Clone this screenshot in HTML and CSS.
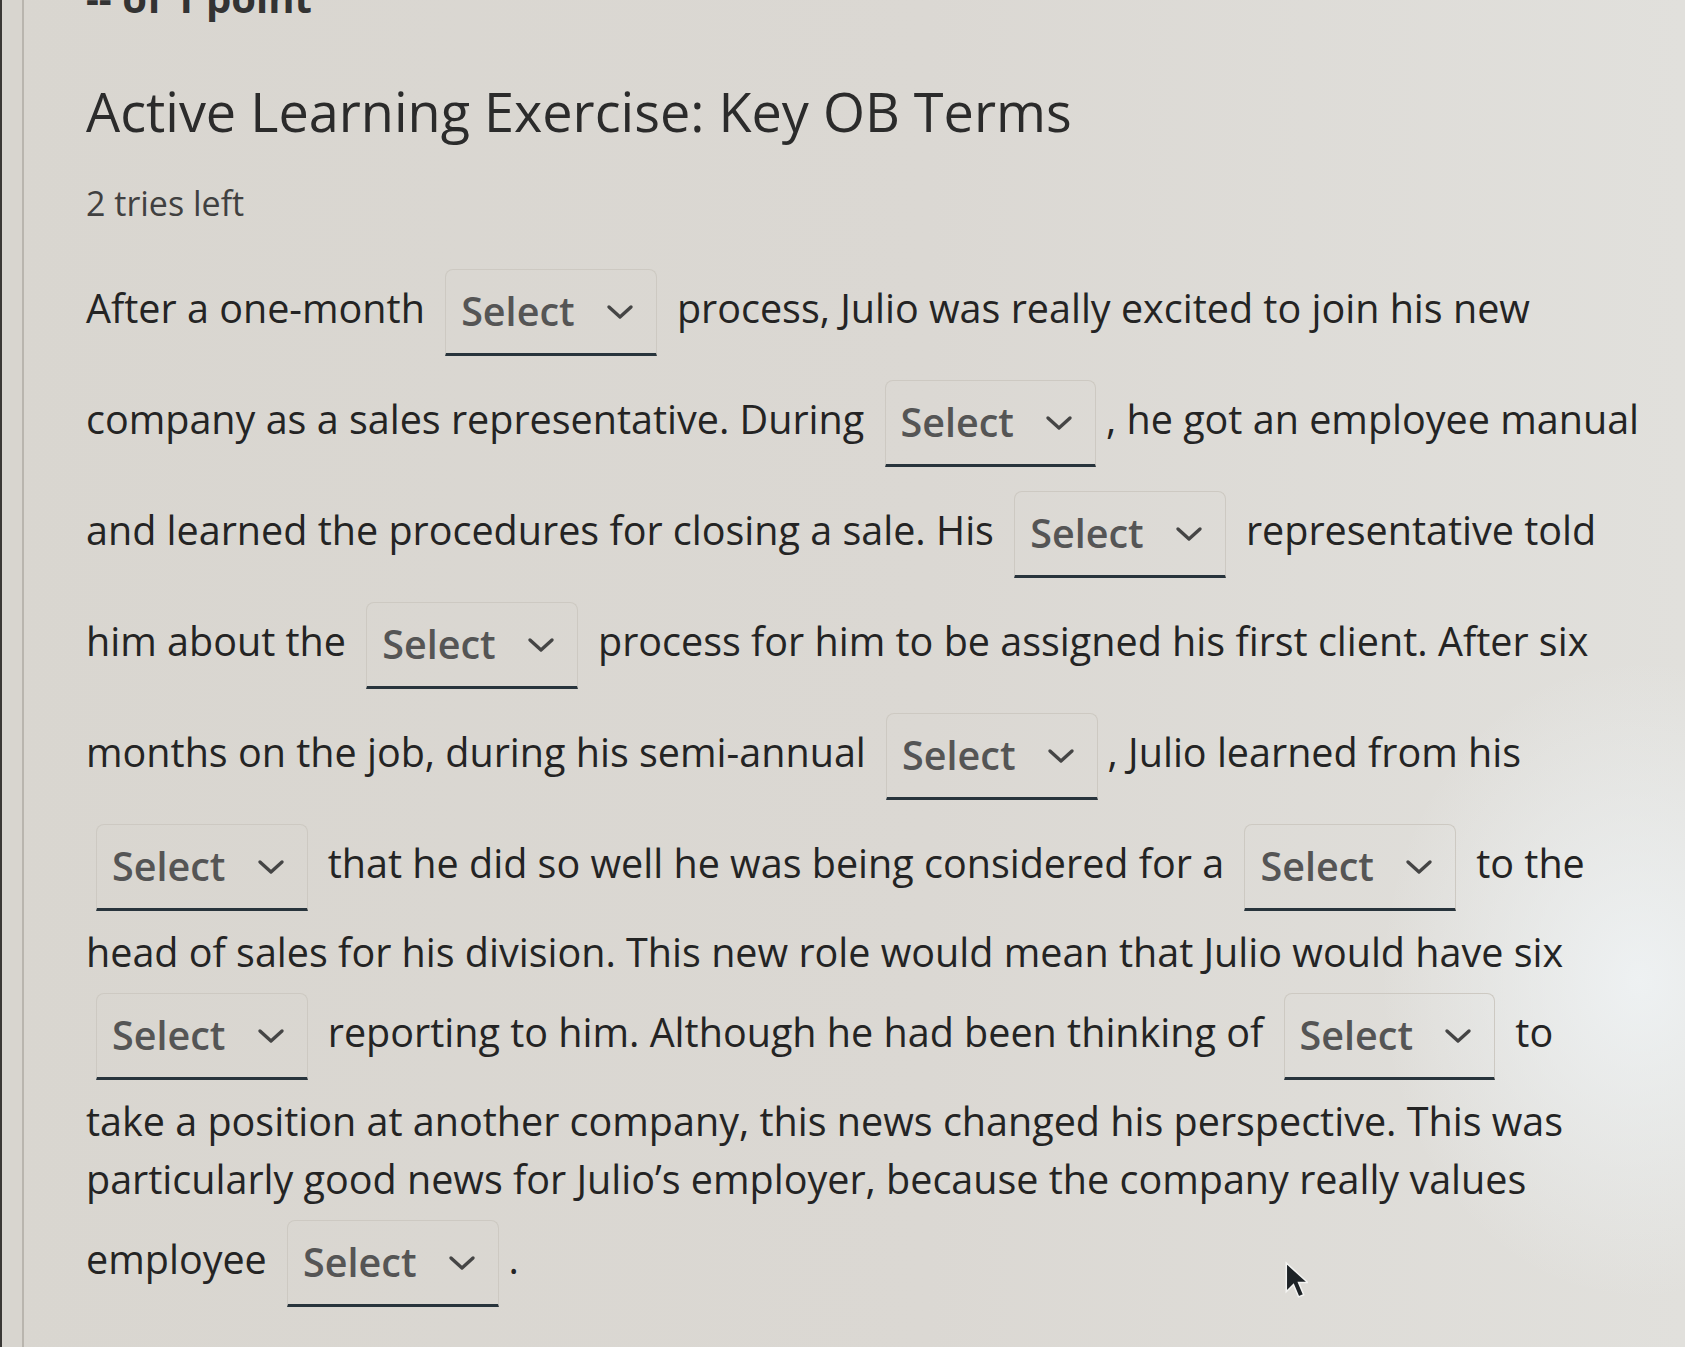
FILE: index.html
```html
<!DOCTYPE html>
<html lang="en">
<head>
<meta charset="utf-8">
<title>Active Learning Exercise: Key OB Terms</title>
<link rel="stylesheet" href="styles.css">
</head>
<body>
<div class="screen">
  <main class="question">
    <div class="points">-- of 1 point</div>
    <h1 class="title">Active Learning Exercise: Key OB Terms</h1>
    <p class="tries">2 tries left</p>
    <p class="passage">After a one-month <span class="dropdown"><span class="dropdown-label">Select</span><svg class="chevron" viewBox="0 0 28 16" aria-hidden="true"><polyline points="3,3 14,13 25,3"/></svg></span> process, Julio was really excited to join his new company as a sales representative. During <span class="dropdown"><span class="dropdown-label">Select</span><svg class="chevron" viewBox="0 0 28 16" aria-hidden="true"><polyline points="3,3 14,13 25,3"/></svg></span>, he got an employee manual and learned the procedures for closing a sale. His <span class="dropdown"><span class="dropdown-label">Select</span><svg class="chevron" viewBox="0 0 28 16" aria-hidden="true"><polyline points="3,3 14,13 25,3"/></svg></span> representative told him about the <span class="dropdown"><span class="dropdown-label">Select</span><svg class="chevron" viewBox="0 0 28 16" aria-hidden="true"><polyline points="3,3 14,13 25,3"/></svg></span> process for him to be assigned his first client. After six months on the job, during his semi-annual <span class="dropdown"><span class="dropdown-label">Select</span><svg class="chevron" viewBox="0 0 28 16" aria-hidden="true"><polyline points="3,3 14,13 25,3"/></svg></span>, Julio learned from his <span class="dropdown"><span class="dropdown-label">Select</span><svg class="chevron" viewBox="0 0 28 16" aria-hidden="true"><polyline points="3,3 14,13 25,3"/></svg></span> that he did so well he was being considered for a <span class="dropdown"><span class="dropdown-label">Select</span><svg class="chevron" viewBox="0 0 28 16" aria-hidden="true"><polyline points="3,3 14,13 25,3"/></svg></span> to the head of sales for his division. This new role would mean that Julio would have six <span class="dropdown"><span class="dropdown-label">Select</span><svg class="chevron" viewBox="0 0 28 16" aria-hidden="true"><polyline points="3,3 14,13 25,3"/></svg></span> reporting to him. Although he had been thinking of <span class="dropdown"><span class="dropdown-label">Select</span><svg class="chevron" viewBox="0 0 28 16" aria-hidden="true"><polyline points="3,3 14,13 25,3"/></svg></span> to take a position at another company, this news changed his perspective. This was particularly good news for Julio’s employer, because the company really values employee <span class="dropdown"><span class="dropdown-label">Select</span><svg class="chevron" viewBox="0 0 28 16" aria-hidden="true"><polyline points="3,3 14,13 25,3"/></svg></span>.</p>
  </main>
  <svg class="pointer" viewBox="0 0 24 40" aria-hidden="true"><path d="M3 2 L3 30 L10 23 L15 35 L20 33 L15 21 L24 21 Z"/></svg>
</div>
</body>
</html>
```
FILE: styles.css
```css
html, body {
  margin: 0;
  padding: 0;
}

body {
  width: 1685px;
  height: 1347px;
  overflow: hidden;
  background: linear-gradient(90deg, #3a3835 0, #3a3835 2px, #d8d5cf 2px, #d8d5cf 22px, #b9b5ae 22px, #b9b5ae 24px, transparent 24px),
              radial-gradient(ellipse 260px 320px at 1640px 980px, rgba(240, 244, 246, 0.85), rgba(240, 244, 246, 0) 100%),
              linear-gradient(90deg, #d9d6d0 0%, #dbd8d3 55%, #e1e0dc 100%);
  font-family: "Open Sans", "Noto Sans", sans-serif;
  color: #292929;
}

/* flow-root keeps the heading's negative margin inside the screen */
.screen {
  position: relative;
  display: flow-root;
  height: 100%;
}

.question {
  padding-left: 86px;
  width: 1556px;
}

.points {
  margin-top: -22px;
  font-size: 40px;
  line-height: 40px;
  font-weight: 700;
  color: #333;
}

.title {
  margin: 61px 0 0;
  font-size: 54px;
  line-height: 65px;
  font-weight: 400;
  color: #2b2b2b;
}

.tries {
  margin: 35px 0 0;
  font-size: 34px;
  line-height: 48px;
  color: #404040;
}

.passage {
  margin: 30px 0 0;
  font-size: 39.5px;
  line-height: 58px;
  color: #242424;
}

.dropdown {
  display: inline-flex;
  align-items: center;
  box-sizing: border-box;
  height: 87px;
  margin: 12px 10px;
  padding: 0 22px 0 15px;
  border: 1px solid #cdc9c2;
  border-bottom: 3px solid #28343c;
  border-radius: 8px 8px 0 0;
  vertical-align: middle;
  line-height: 1;
}

.dropdown-label {
  font-weight: 600;
  color: #555;
}

.chevron {
  width: 28px;
  height: 16px;
  margin-left: 31px;
  fill: none;
  stroke: #454545;
  stroke-width: 3.4;
  stroke-linecap: round;
  stroke-linejoin: round;
}

.pointer {
  position: absolute;
  left: 1283px;
  top: 1261px;
  width: 25px;
  height: 41px;
  fill: #1d2226;
  stroke: #f4f4f2;
  stroke-width: 1.5;
}
```
